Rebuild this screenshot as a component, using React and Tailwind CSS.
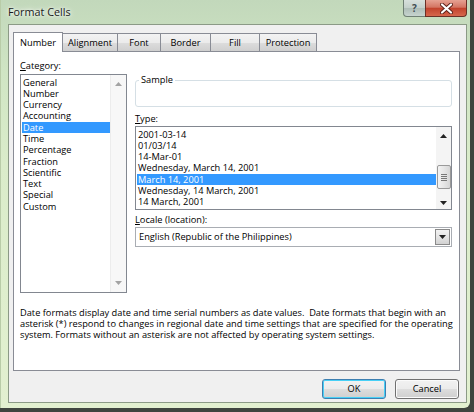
import React from "react";

const categories = ["General","Number","Currency","Accounting","Date","Time","Percentage","Fraction","Scientific","Text","Special","Custom"];
const types = ["2001-03-14","01/03/14","14-Mar-01","Wednesday, March 14, 2001","March 14, 2001","Wednesday, 14 March, 2001","14 March, 2001"];

function Tri({ up, color = "#222" }) {
  return (
    <svg width="7" height="4" viewBox="0 0 7 4" className="block">
      {up ? <path d="M0 4 L3.5 0 L7 4 Z" fill={color} /> : <path d="M0 0 L7 0 L3.5 4 Z" fill={color} />}
    </svg>
  );
}

function Tab({ label, w, selected }) {
  if (selected) {
    return (
      <div className={`h-[20px] ${w} bg-white border border-b-0 border-[#898c95] -mb-px relative z-10 flex items-center justify-center text-black`}>
        {label}
      </div>
    );
  }
  return (
    <div className={`h-[18px] ${w} -ml-px bg-[linear-gradient(180deg,#f3f3f3_0%,#ebebeb_50%,#dddddd_51%,#cfcfcf_100%)] border border-b-0 border-[#898c95] flex items-center justify-center text-black`}>
      {label}
    </div>
  );
}

export default function App() {
  return (
    <div className="w-[474px] h-[412px] overflow-hidden bg-[#3f453f]">
      <div className="w-[470px] h-[408px] flex flex-col rounded-br-[6px] bg-[linear-gradient(180deg,#c2d8bb_0%,#d0e5c4_18%,#daecca_40%,#e2f0d0_100%)] border-l border-[#b9cca8] font-['Open_Sans',sans-serif] text-[9.25px] leading-[11.3px] text-black">
        {/* Title bar */}
        <div className="h-[24px] flex items-start shrink-0">
          <span className="ml-[7px] mt-[5px] text-[10.8px] leading-[14px] text-[#1a1a1a] [text-shadow:0_0_6px_#ffffff,0_0_3px_#ffffff]">Format Cells</span>
          <div className="ml-auto mr-[3px] flex">
            <div className="w-[23px] h-[17px] rounded-bl-[4px] border border-t-0 border-[#6f7f74] bg-[linear-gradient(180deg,#d7e0dc_0%,#c4d0cb_50%,#aebdb7_51%,#c7d4cf_100%)] flex items-center justify-center text-[10px] font-bold text-[#3e4c52] leading-none">
              ?
            </div>
            <div className="w-[42px] h-[17px] -ml-px rounded-br-[4px] border border-t-0 border-[#6b2f26] bg-[linear-gradient(180deg,#e6a293_0%,#d47563_45%,#c2432d_52%,#d6664c_100%)] flex items-center justify-center">
              <svg width="13" height="11" viewBox="0 0 13 11">
                <path d="M2 1.5 L11 9.5 M11 1.5 L2 9.5" stroke="#5a2018" strokeWidth="4" strokeLinecap="round" />
                <path d="M2 1.5 L11 9.5 M11 1.5 L2 9.5" stroke="#ffffff" strokeWidth="2.2" strokeLinecap="round" />
              </svg>
            </div>
          </div>
        </div>

        {/* Client area */}
        <div className="ml-[7px] mr-[3px] mb-[5px] flex-1 bg-[#f0f0f0] border border-[#8b9a86] flex flex-col pl-[4px] pt-[6px]">
          {/* Tabs */}
          <div className="flex items-end h-[20px]">
            <Tab label="Number" w="w-[50px]" selected />
            <Tab label="Alignment" w="w-[56px]" />
            <Tab label="Font" w="w-[44px]" />
            <Tab label="Border" w="w-[51px]" />
            <Tab label="Fill" w="w-[50px]" />
            <Tab label="Protection" w="w-[58px]" />
          </div>

          {/* Panel */}
          <div className="w-[447px] h-[320px] bg-white border border-[#898c95] pl-[6px] pr-[7px] pt-[8px] flex flex-col">
            <div className="flex gap-[8px]">
              {/* Left column */}
              <div className="w-[107px] flex flex-col">
                <div className="h-[12px] leading-[12px]"><span className="underline">C</span>ategory:</div>
                <div className="mt-[2px] h-[219px] border border-[#828790] bg-white flex">
                  <div className="flex-1 pt-[1.5px] pl-px">
                    {categories.map((c) => (
                      <div key={c} className={`h-[11.3px] pl-[1px] ${c === "Date" ? "bg-[#3399ff] text-white" : ""}`}>{c}</div>
                    ))}
                  </div>
                  <div className="w-[16px] bg-[#f7f7f7] border-l border-[#ececec] flex flex-col items-center justify-between py-[7px]">
                    <Tri up color="#a3a3a3" />
                    <Tri color="#a3a3a3" />
                  </div>
                </div>
              </div>

              {/* Right column */}
              <div className="w-[317px] flex flex-col">
                <div className="mt-[20px] h-[27px] border border-[#d5dfe5] rounded-[3px] relative">
                  <span className="absolute -top-[7px] left-[3px] bg-white px-[2px] leading-[12px]">Sample</span>
                </div>
                <div className="mt-[6px] h-[12px] leading-[12px]"><span className="underline">T</span>ype:</div>
                <div className="mt-px h-[84px] border border-[#828790] bg-white flex">
                  <div className="flex-1 pt-[1.5px] pl-px">
                    {types.map((t) => (
                      <div key={t} className={`h-[11.3px] pl-[1px] ${t === "March 14, 2001" ? "bg-[#3399ff] text-white" : ""}`}>{t}</div>
                    ))}
                  </div>
                  <div className="w-[15px] bg-[#f4f4f4] flex flex-col items-center pt-[7px] pb-[4px]">
                    <Tri up />
                    <div className="mt-[27px] w-[14px] h-[24px] rounded-[2px] border border-[#9a9a9a] bg-[linear-gradient(90deg,#f3f3f3_0%,#e6e6e6_50%,#d6d6d6_100%)] flex flex-col items-center justify-center gap-[1px]">
                      <div className="w-[6px] h-px bg-[#777]" />
                      <div className="w-[6px] h-px bg-[#777]" />
                      <div className="w-[6px] h-px bg-[#777]" />
                      <div className="w-[6px] h-px bg-[#777]" />
                    </div>
                    <div className="mt-auto"><Tri /></div>
                  </div>
                </div>
                <div className="mt-[4px] h-[12px] leading-[12px]"><span className="underline">L</span>ocale (location):</div>
                <div className="mt-px h-[20px] border border-[#a9adb3] bg-white flex items-center">
                  <div className="flex-1 pl-[3px]">English (Republic of the Philippines)</div>
                  <div className="w-[15px] h-[16px] mr-px border border-[#8a8a8a] bg-[linear-gradient(180deg,#f2f2f2_0%,#e4e4e4_50%,#d2d2d2_100%)] flex items-center justify-center">
                    <Tri />
                  </div>
                </div>
              </div>
            </div>

            <p className="mt-[14px] w-[436px] leading-[11px]">
              Date formats display date and time serial numbers as date values.&nbsp; Date formats that begin with an asterisk (*) respond to changes in regional date and time settings that are specified for the operating system. Formats without an asterisk are not affected by operating system settings.
            </p>
          </div>

          {/* Buttons */}
          <div className="w-[447px] flex justify-end gap-[9px] pr-px mt-[8px]">
            <div className="w-[64px] h-[20px] rounded-[3px] border border-[#3c7fb1] shadow-[inset_0_0_0_1px_#48d0f6] bg-[linear-gradient(180deg,#f2f2f2_0%,#ebebeb_50%,#dddddd_51%,#cfcfcf_100%)] flex items-center justify-center">OK</div>
            <div className="w-[64px] h-[20px] rounded-[3px] border border-[#707070] shadow-[inset_0_0_0_1px_#fbfbfb] bg-[linear-gradient(180deg,#f2f2f2_0%,#ebebeb_50%,#dddddd_51%,#cfcfcf_100%)] flex items-center justify-center">Cancel</div>
          </div>
        </div>
      </div>
    </div>
  );
}
